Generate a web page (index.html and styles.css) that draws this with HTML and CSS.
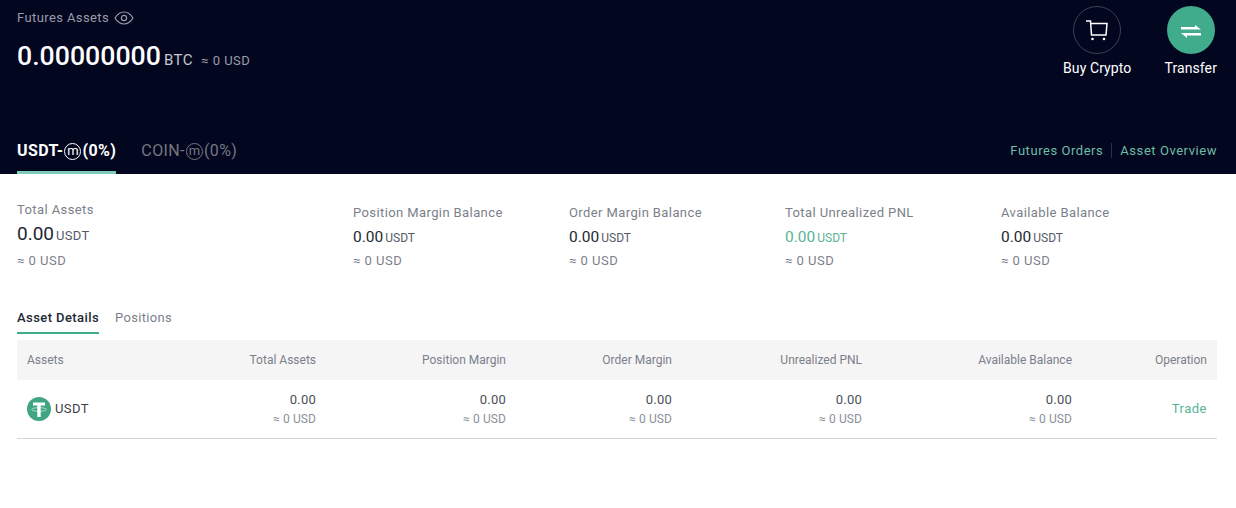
FILE: index.html
```html
<!DOCTYPE html>
<html lang="en">
<head>
    <meta charset="UTF-8">
    <title>Futures Assets</title>
    <link rel="stylesheet" href="styles.css">
</head>
<body>
    <header class="hero">
        <div class="hero-top">
            <div class="summary">
                <div class="summary-label">
                    Futures Assets
                    <svg class="eye" width="20" height="14" viewBox="0 0 20 14" fill="none" stroke="#9a9ca8" stroke-width="1.2">
                        <path d="M1 7C3.5 3 6.5 1 10 1s6.500 2 9 6c-2.500 4-5.500 6-9 6S3.500 11 1 7z"/>
                        <circle cx="10" cy="7" r="2.600"/>
                    </svg>
                </div>
                <div class="summary-value">
                    <span class="btc-amount">0.00000000</span>
                    <span class="btc-unit">BTC</span>
                    <span class="btc-usd">≈ 0 USD</span>
                </div>
            </div>
            <div class="actions">
                <a class="action">
                    <span class="action-icon action-outline">
                        <svg width="24" height="24" viewBox="0 0 24 24" fill="none" stroke="#fff" stroke-width="1.500">
                            <path d="M1 3h4.500l1 14h14.500l1-11.500L6 5.500"/>
                            <circle cx="7.500" cy="21" r="1.300" fill="#fff" stroke="none"/>
                            <circle cx="19" cy="21" r="1.300" fill="#fff" stroke="none"/>
                        </svg>
                    </span>
                    Buy Crypto
                </a>
                <a class="action">
                    <span class="action-icon action-green">
                        <svg width="22" height="18" viewBox="0 0 22 18" fill="#fff">
                            <path d="M1 6h14V4l6 4.500H1z"/>
                            <path d="M21 12v2.500H7V17l-6-5z"/>
                        </svg>
                    </span>
                    Transfer
                </a>
            </div>
        </div>
        <div class="hero-tabs">
            <div class="market-tabs">
                <a class="market-tab active">USDT-<span class="m-badge">m</span>(0%)</a>
                <a class="market-tab">COIN-<span class="m-badge">m</span>(0%)</a>
            </div>
            <div class="hero-links">
                <a>Futures Orders</a>
                <a>Asset Overview</a>
            </div>
        </div>
    </header>

    <section class="balances">
        <div class="balance balance-main">
            <div class="balance-label">Total Assets</div>
            <div class="balance-value"><b>0.00</b><span>USDT</span></div>
            <div class="balance-usd">≈ 0 USD</div>
        </div>
        <div class="balance">
            <div class="balance-label">Position Margin Balance</div>
            <div class="balance-value"><b>0.00</b><span>USDT</span></div>
            <div class="balance-usd">≈ 0 USD</div>
        </div>
        <div class="balance">
            <div class="balance-label">Order Margin Balance</div>
            <div class="balance-value"><b>0.00</b><span>USDT</span></div>
            <div class="balance-usd">≈ 0 USD</div>
        </div>
        <div class="balance">
            <div class="balance-label">Total Unrealized PNL</div>
            <div class="balance-value green"><b>0.00</b><span>USDT</span></div>
            <div class="balance-usd">≈ 0 USD</div>
        </div>
        <div class="balance">
            <div class="balance-label">Available Balance</div>
            <div class="balance-value"><b>0.00</b><span>USDT</span></div>
            <div class="balance-usd">≈ 0 USD</div>
        </div>
    </section>

    <nav class="detail-tabs">
        <a class="detail-tab active">Asset Details</a>
        <a class="detail-tab">Positions</a>
    </nav>

    <table class="assets-table">
        <thead>
            <tr>
                <th>Assets</th>
                <th>Total Assets</th>
                <th>Position Margin</th>
                <th>Order Margin</th>
                <th>Unrealized PNL</th>
                <th>Available Balance</th>
                <th>Operation</th>
            </tr>
        </thead>
        <tbody>
            <tr>
                <td>
                    <div class="coin">
                        <svg width="24" height="24" viewBox="0 0 24 24">
                            <circle cx="12" cy="12" r="12" fill="#3fa584"/>
                            <ellipse cx="12" cy="12.500" rx="7.500" ry="1.800" fill="none" stroke="#a8dcca" stroke-width="1"/>
                            <path fill="#fff" d="M6 5.500h12v3h-4.300V20h-3.400V8.500H6z"/>
                        </svg>
                        USDT
                    </div>
                </td>
                <td><div class="num">0.00</div><div class="usd">≈ 0 USD</div></td>
                <td><div class="num">0.00</div><div class="usd">≈ 0 USD</div></td>
                <td><div class="num">0.00</div><div class="usd">≈ 0 USD</div></td>
                <td><div class="num">0.00</div><div class="usd">≈ 0 USD</div></td>
                <td><div class="num">0.00</div><div class="usd">≈ 0 USD</div></td>
                <td><a class="trade">Trade</a></td>
            </tr>
        </tbody>
    </table>
</body>
</html>
```

FILE: styles.css
```css
/* Page */
body {
    margin: 0;
    font-family: Roboto, Arial, sans-serif;
    font-size: 13px;
    color: #212833;
    background-color: #fff;
}

/* Dark header */
.hero {
    height: 174px;
    padding: 0 19px 0 17px;
    box-sizing: border-box;
    background-color: #03061f;
    display: flex;
    flex-direction: column;
    justify-content: space-between;
}
.hero-top {
    display: flex;
    justify-content: space-between;
    align-items: flex-start;
}
.summary {
    padding-top: 10px;
}
.summary-label {
    display: flex;
    align-items: center;
    gap: 5px;
    color: #9a9ca8;
    letter-spacing: 0.4px;
    line-height: 16px;
}
.summary-value {
    display: flex;
    align-items: baseline;
    margin-top: 8px;
}
.btc-amount {
    font-size: 26.7px;
    font-weight: 500;
    line-height: 44px;
    color: #fff;
}
.btc-unit {
    font-size: 15px;
    margin-left: 3px;
    color: #c5c6cd;
    letter-spacing: 0.5px;
}
.btc-usd {
    margin-left: 8px;
    color: #9a9ca8;
    letter-spacing: 0.5px;
}
.actions {
    display: flex;
    gap: 33px;
    padding-top: 6px;
}
.action {
    display: flex;
    flex-direction: column;
    align-items: center;
    gap: 5px;
    color: #fff;
    font-size: 14px;
    line-height: 18px;
    letter-spacing: 0.1px;
}
.action-icon {
    width: 48px;
    height: 48px;
    border-radius: 50%;
    box-sizing: border-box;
    display: flex;
    align-items: center;
    justify-content: center;
}
.action-outline {
    border: 1px solid #3d4052;
}
.action-green {
    background-color: #41ac8b;
}
.hero-tabs {
    display: flex;
    justify-content: space-between;
    align-items: flex-end;
}
.market-tabs {
    display: flex;
    gap: 25px;
}
.market-tab {
    height: 37px;
    box-sizing: border-box;
    border-bottom: 3px solid transparent;
    font-size: 16px;
    line-height: 20px;
    padding-top: 4px;
    color: #75777f;
    letter-spacing: 0.4px;
    display: flex;
    align-items: flex-start;
}
.market-tab.active {
    color: #fff;
    font-weight: 700;
    border-bottom-color: #7fcdb8;
}
.m-badge {
    width: 17px;
    height: 17px;
    margin: 2px 1px 0;
    border: 1px solid currentColor;
    border-radius: 50%;
    box-sizing: border-box;
    font-size: 13px;
    font-weight: 400;
    line-height: 14px;
    text-align: center;
    letter-spacing: 0;
}
.hero-links {
    display: flex;
    align-items: center;
    height: 14px;
    margin-bottom: 17px;
    color: #6dbda5;
    letter-spacing: 0.55px;
}
.hero-links a + a {
    margin-left: 8px;
    padding-left: 8px;
    border-left: 1px solid #2c3040;
}

/* Balance summary row */
.balances {
    display: flex;
    padding: 28px 19px 0 17px;
    height: 104px;
    box-sizing: border-box;
}
.balance {
    width: 216px;
    padding-top: 3px;
}
.balance-main {
    width: 336px;
    padding-top: 0;
}
.balance-label {
    color: #7b7f8a;
    letter-spacing: 0.4px;
    line-height: 16px;
}
.balance-value {
    margin-top: 6px;
    line-height: 20px;
    color: #212833;
}
.balance-value b {
    font-size: 15.500px;
    font-weight: 400;
}
.balance-value span {
    margin-left: 2px;
    font-size: 12px;
    color: #555a66;
}
.balance-main .balance-value b {
    font-size: 19px;
}
.balance-main .balance-value span {
    font-size: 13px;
    letter-spacing: 0.3px;
}
.balance-value.green,
.balance-value.green span {
    color: #58b397;
}
.balance-usd {
    margin-top: 5px;
    color: #7b7f8a;
    letter-spacing: 0.5px;
    line-height: 16px;
}
.balance-main .balance-usd {
    margin-top: 7px;
}

/* Detail tabs */
.detail-tabs {
    display: flex;
    gap: 16px;
    margin: 27px 19px 0 17px;
}
.detail-tab {
    height: 29px;
    box-sizing: border-box;
    line-height: 26px;
    color: #7b7f8a;
    letter-spacing: 0.3px;
}
.detail-tab.active {
    color: #212833;
    font-weight: 500;
    letter-spacing: 0.42px;
    border-bottom: 2px solid #41ac8b;
}

/* Assets table */
.assets-table {
    width: 1200px;
    margin: 6px 19px 0 17px;
    border-collapse: collapse;
    table-layout: fixed;
}
.assets-table th {
    height: 40px;
    padding: 0 10px;
    box-sizing: border-box;
    background-color: #f5f5f5;
    font-size: 12px;
    font-weight: 400;
    color: #7b7f8a;
    text-align: right;
}
.assets-table td {
    height: 57px;
    padding: 0 10px 1px;
    text-align: right;
    border-bottom: 1px solid #d5d5d5;
}
.assets-table th:nth-child(1) { width: 149px; text-align: left; }
.assets-table th:nth-child(2) { width: 160px; }
.assets-table th:nth-child(3) { width: 190px; }
.assets-table th:nth-child(4) { width: 166px; }
.assets-table th:nth-child(5) { width: 190px; }
.assets-table th:nth-child(6) { width: 210px; }
.coin {
    display: flex;
    align-items: center;
    gap: 4px;
    color: #3b4048;
    letter-spacing: 0.4px;
}
.num {
    line-height: 18px;
    color: #4a4f58;
    letter-spacing: 0.2px;
}
.usd {
    margin-top: 2px;
    font-size: 12px;
    line-height: 16px;
    color: #8b8f99;
    letter-spacing: 0.1px;
}
.trade {
    color: #58b397;
    letter-spacing: 0.5px;
}
```
